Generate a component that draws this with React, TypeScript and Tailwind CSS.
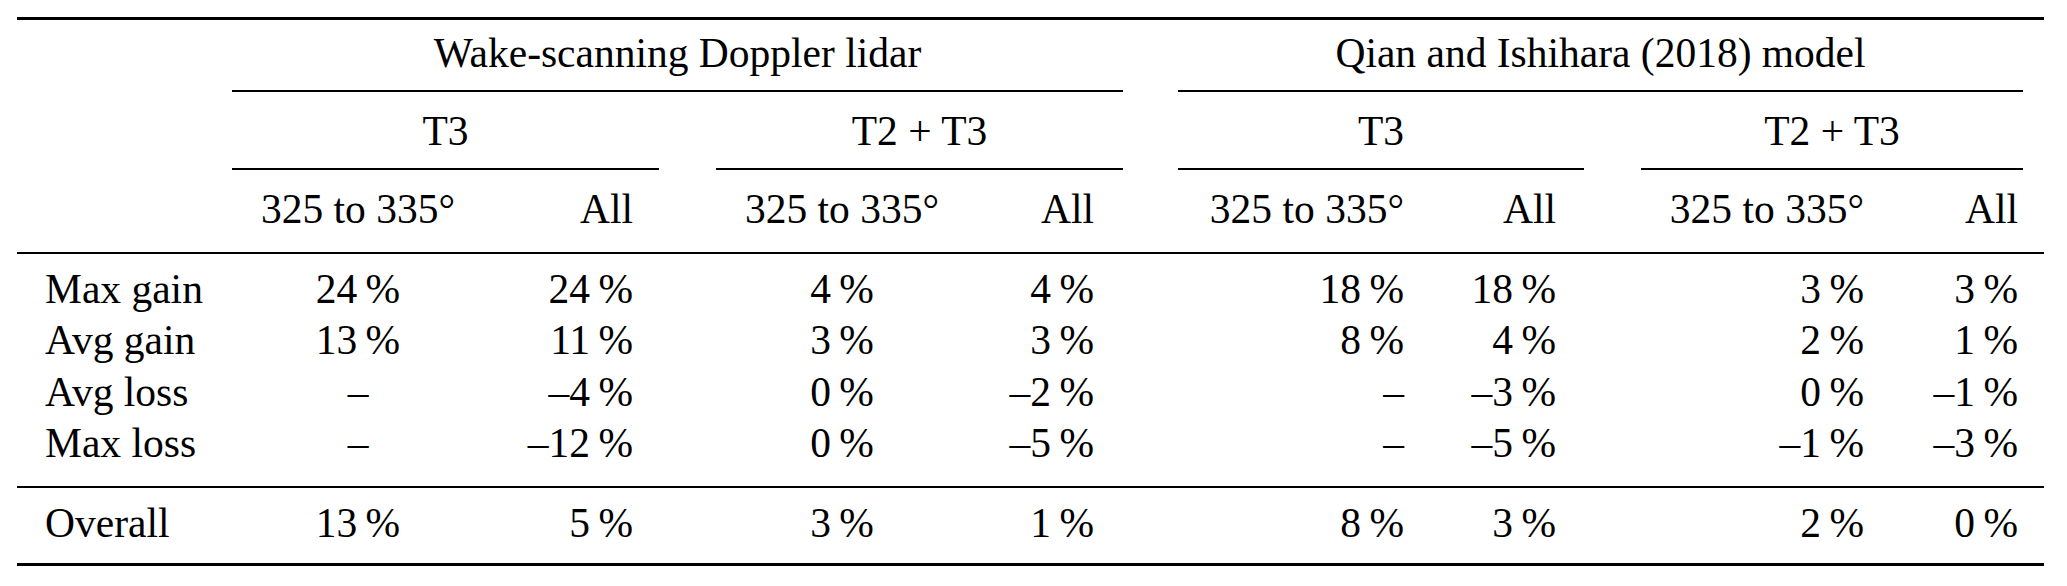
const grid =
  "grid grid-cols-[215px_252px_175px_57px_252px_155px_55px_252px_154px_57px_249px_154px]";

const align = [
  "text-center",
  "text-right pr-[26px]",
  "text-center",
  "text-right pr-[29px]",
  "text-right pr-[26px]",
  "text-right pr-[28px]",
  "text-right pr-[26px]",
  "text-right pr-[26px]",
];

const pct = (v: string) => v.replace(" %", "\u2009%");

const rows = [
  { label: "Max gain", values: ["24 %", "24 %", "4 %", "4 %", "18 %", "18 %", "3 %", "3 %"] },
  { label: "Avg gain", values: ["13 %", "11 %", "3 %", "3 %", "8 %", "4 %", "2 %", "1 %"] },
  { label: "Avg loss", values: ["–", "–4 %", "0 %", "–2 %", "–", "–3 %", "0 %", "–1 %"] },
  { label: "Max loss", values: ["–", "–12 %", "0 %", "–5 %", "–", "–5 %", "–1 %", "–3 %"] },
];

const overall = { label: "Overall", values: ["13 %", "5 %", "3 %", "1 %", "8 %", "3 %", "2 %", "0 %"] };

function DataRow({ label, values }: { label: string; values: string[] }) {
  const cells: React.ReactNode[] = [
    <div key="l" className="pl-[28px]">
      {label}
    </div>,
  ];
  values.forEach((v, i) => {
    if (i === 2 || i === 4 || i === 6) cells.push(<div key={"g" + i} />);
    cells.push(
      <div key={i} className={align[i]}>
        {pct(v)}
      </div>
    );
  });
  return <div className={grid + " h-[51.3px] leading-[51px]"}>{cells}</div>;
}

function CmidRules() {
  return (
    <div className={grid + " mt-[11px]"}>
      <div />
      <div className="col-span-2 h-[2px] bg-black" />
      <div />
      <div className="col-span-2 h-[2px] bg-black" />
      <div />
      <div className="col-span-2 h-[2px] bg-black" />
      <div />
      <div className="col-span-2 h-[2px] bg-black mr-[21px]" />
    </div>
  );
}

export default function App() {
  return (
    <div
      className="w-[2067px] h-[586px] bg-white text-black pt-[17px] pl-[17px] text-[41.5px] leading-[51px]"
      style={{ fontFamily: '"Liberation Serif", "Times New Roman", serif' }}
    >
      <div className="w-[2027px] flex flex-col">
        <div className="h-[3px] bg-black" />

        {/* group headers */}
        <div className={grid + " mt-[8px]"}>
          <div />
          <div className="col-span-5 text-center">Wake-scanning Doppler lidar</div>
          <div />
          <div className="col-span-5 text-center mr-[21px]">Qian and Ishihara (2018) model</div>
        </div>
        <div className={grid + " mt-[11px]"}>
          <div />
          <div className="col-span-5 h-[2px] bg-black" />
          <div />
          <div className="col-span-5 h-[2px] bg-black mr-[21px]" />
        </div>

        {/* turbine sets */}
        <div className={grid + " mt-[14px]"}>
          <div />
          <div className="col-span-2 text-center">T3</div>
          <div />
          <div className="col-span-2 text-center">T2 + T3</div>
          <div />
          <div className="col-span-2 text-center">T3</div>
          <div />
          <div className="col-span-2 text-center mr-[21px]">T2 + T3</div>
        </div>
        <CmidRules />

        {/* wind direction sectors */}
        <div className={grid + " mt-[14px]"}>
          <div />
          <div className={align[0]}>325 to 335°</div>
          <div className={align[1]}>All</div>
          <div />
          <div className={align[2]}>325 to 335°</div>
          <div className={align[3]}>All</div>
          <div />
          <div className={align[4]}>325 to 335°</div>
          <div className={align[5]}>All</div>
          <div />
          <div className={align[6]}>325 to 335°</div>
          <div className={align[7]}>All</div>
        </div>

        <div className="h-[2px] bg-black mt-[17px]" />

        <div className="mt-[10px]">
          {rows.map((r) => (
            <DataRow key={r.label} label={r.label} values={r.values} />
          ))}
        </div>

        <div className="h-[2px] bg-black mt-[17px]" />
        <div className="mt-[10px]">
          <DataRow label={overall.label} values={overall.values} />
        </div>
        <div className="h-[3px] bg-black mt-[14px]" />
      </div>
    </div>
  );
}
